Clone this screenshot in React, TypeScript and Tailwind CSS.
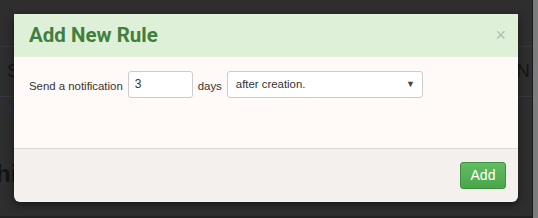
import React from "react";

export default function App() {
  return (
    <div className="relative w-[538px] h-[218px] overflow-hidden bg-[#2e2e2e] flex">
      {/* underlying page (dimmed) */}
      <div className="flex-1 flex flex-col border-b-2 border-[#222]">
        <div className="h-[47px] border-b border-[#35393d]" />
        <div className="h-[50px] flex items-center justify-between pl-[7px] pr-[2px] border-b border-[#35393d] text-[19px] text-[#161616] [font-family:'Liberation_Sans',sans-serif]">
          <span>S</span>
          <span>N</span>
        </div>
        <div className="h-[28px] flex items-center pl-[7px] text-[12px] text-[#1e3850] [font-family:'Liberation_Sans',sans-serif]">A</div>
        <div className="flex-1 flex items-center -ml-[4px] pt-[6px] text-[24px] font-bold text-[#141414] [font-family:'Liberation_Sans',sans-serif]">hi</div>
      </div>
      <div className="w-[6px] border-l border-[#1a1a1a] bg-[#7d7d7d]" />

      {/* modal */}
      <div className="absolute left-[14px] top-[14px] w-[504px] h-[188px] flex flex-col rounded-b-[6px] overflow-hidden shadow-[0_3px_9px_rgba(0,0,0,0.5)]">
        <div className="h-[43px] shrink-0 bg-[#dff0d8] flex items-center justify-between pl-[15px] pr-[12px]">
          <span className="text-[20.5px] font-bold text-[#427f3e] [font-family:Roboto,sans-serif] leading-none">Add New Rule</span>
          <span className="text-[18px] leading-none text-[#b4bcb0] [font-family:'Liberation_Sans',sans-serif] -mt-[1px]">×</span>
        </div>
        <div className="h-[91px] shrink-0 bg-[#fffaf8] pl-[15px] pt-[14px] flex items-start text-[11.4px] text-[#333] [font-family:'Liberation_Sans',sans-serif]">
          <div className="flex items-center">
            <span className="pt-[5px]">Send a notification</span>
            <div className="ml-[5px] w-[65px] h-[27px] border border-[#ccc] rounded-[3px] bg-white pl-[6px] pt-[3px] text-[12px] text-[#333]">3</div>
            <span className="ml-[5px] pt-[5px]">days</span>
            <div className="ml-[5px] w-[196px] h-[27px] border border-[#ccc] rounded-[3px] bg-white flex items-center justify-between pl-[8px] pr-[7px]">
              <span>after creation.</span>
              <span className="text-[9px] text-[#444]">▼</span>
            </div>
          </div>
        </div>
        <div className="flex-1 bg-[#f3f0ee] border-t border-[#dcd8d4] flex items-center justify-end pr-[12px]">
          <button className="w-[46px] h-[27px] rounded-[3px] border border-[#3e8f3e] bg-gradient-to-b from-[#62bd62] to-[#4aa64a] text-white text-[14px] [font-family:'Liberation_Sans',sans-serif]">Add</button>
        </div>
      </div>
    </div>
  );
}
